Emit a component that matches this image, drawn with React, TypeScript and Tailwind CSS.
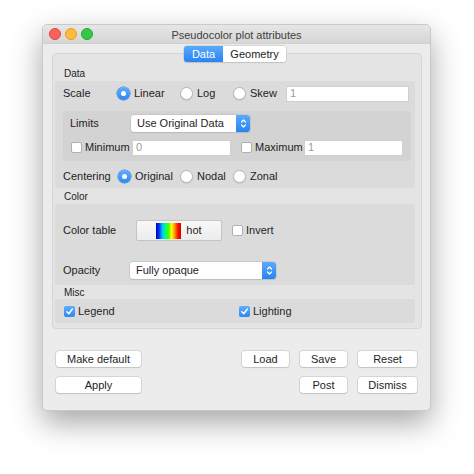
import React from 'react';

const font = "font-['Liberation_Sans',Arial,sans-serif]";

function Radio({ label, checked, width }: { label: string; checked?: boolean; width: string }) {
  return (
    <div className={`flex items-center gap-[4px] ${width}`}>
      {checked ? (
        <span className="flex h-[13px] w-[13px] items-center justify-center rounded-full bg-gradient-to-b from-[#62adfb] to-[#2a87f2] shadow-[0_0_0_0.5px_#2f7fe0]">
          <span className="h-[5px] w-[5px] rounded-full bg-white" />
        </span>
      ) : (
        <span className="h-[13px] w-[13px] rounded-full border border-[#b4b4b4] bg-white shadow-[0_1px_1px_rgba(0,0,0,0.08)]" />
      )}
      <span>{label}</span>
    </div>
  );
}

function Check({ label, checked, width }: { label: string; checked?: boolean; width?: string }) {
  return (
    <div className={`flex items-center gap-[3px] ${width ?? ''}`}>
      {checked ? (
        <span className="flex h-[11px] w-[11px] items-center justify-center rounded-[2px] bg-gradient-to-b from-[#62adfb] to-[#2a87f2]">
          <svg width="9" height="9" viewBox="0 0 10 10">
            <path d="M2 5.3 L4.2 7.5 L8.2 2.2" fill="none" stroke="white" strokeWidth="1.6" strokeLinecap="round" strokeLinejoin="round" />
          </svg>
        </span>
      ) : (
        <span className="h-[11px] w-[11px] rounded-[2px] border border-[#b0b0b0] bg-white" />
      )}
      <span>{label}</span>
    </div>
  );
}

function Field({ value, width }: { value: string; width: string }) {
  return (
    <div className={`flex h-[16px] items-center border border-[#cfcfcf] bg-white px-[3px] text-[#9a9a9a] ${width}`}>
      {value}
    </div>
  );
}

function Select({ value, width }: { value: string; width: string }) {
  return (
    <div className={`flex h-[17px] overflow-hidden rounded-[3px] bg-white shadow-[0_0_0_0.5px_#b9b9b9,0_1px_1px_rgba(0,0,0,0.12)] ${width}`}>
      <span className="flex flex-1 items-center pl-[6px] text-[#1e1e1e]">{value}</span>
      <span className="flex w-[14px] items-center justify-center bg-gradient-to-b from-[#5aa9fb] to-[#2684f1]">
        <svg width="7" height="11" viewBox="0 0 7 11">
          <path d="M1.5 4 L3.5 2 L5.5 4 M1.5 7 L3.5 9 L5.5 7" fill="none" stroke="white" strokeWidth="1.2" strokeLinecap="round" strokeLinejoin="round" />
        </svg>
      </span>
    </div>
  );
}

function Button({ label, width }: { label: string; width: string }) {
  return (
    <div className={`flex h-[16px] items-center justify-center rounded-[3px] bg-white text-[#1e1e1e] shadow-[0_0_0_0.5px_#bdbdbd,0_1px_1px_rgba(0,0,0,0.15)] ${width}`}>
      {label}
    </div>
  );
}

export default function App() {
  return (
    <div className={`h-[474px] w-[474px] bg-white pl-[42px] pt-[24px] text-[11px] text-[#1e1e1e] ${font}`}>
      <div className="flex h-[387px] w-[389px] flex-col overflow-hidden rounded-[5px] border border-[#c9c9c9] bg-[#ececec] shadow-[0_12px_30px_rgba(0,0,0,0.35)]">
        {/* Title bar */}
        <div className="relative flex h-[19px] items-center justify-center border-b border-[#d0d0d0] bg-gradient-to-b from-[#e6e6e6] to-[#d6d6d6] text-[#404040]">
          <div className="absolute left-[6px] top-[3px] flex gap-[4px]">
            <span className="h-[12px] w-[12px] rounded-full border border-[#e2463f] bg-[#fc605c]" />
            <span className="h-[12px] w-[12px] rounded-full border border-[#e1a116] bg-[#fdbc40]" />
            <span className="h-[12px] w-[12px] rounded-full border border-[#2aa52c] bg-[#34c84a]" />
          </div>
          <span className="pt-[2px]">Pseudocolor plot attributes</span>
        </div>

        {/* Tabs */}
        <div className="relative z-10 mt-[2px] flex justify-center pr-[3px]">
          <div className="flex h-[16px] overflow-hidden rounded-[3px] shadow-[0_0_0_0.5px_#bdbdbd,0_1px_1px_rgba(0,0,0,0.12)]">
            <span className="flex w-[39px] items-center justify-center bg-gradient-to-b from-[#5aa9fb] to-[#2684f1] text-white">Data</span>
            <span className="flex w-[63px] items-center justify-center bg-white">Geometry</span>
          </div>
        </div>

        {/* Tab panel */}
        <div className="-mt-[9px] ml-[9px] flex h-[276px] w-[370px] flex-col rounded-[4px] border border-[#d6d6d6] bg-[#e4e4e4] pl-[2px] pr-[6px] pt-[14px]">
          <span className="pl-[9px] text-[10px] leading-[12px]">Data</span>
          <div className="mt-[1px] flex flex-col rounded-[3px] bg-[#dbdbdb] pb-[3px] pt-[4px]">
            <div className="flex h-[17px] items-center pl-[8px]">
              <span className="w-[54px]">Scale</span>
              <Radio label="Linear" checked width="w-[63px]" />
              <Radio label="Log" width="w-[53px]" />
              <Radio label="Skew" width="w-[53px]" />
              <Field value="1" width="w-[123px]" />
            </div>
            <div className="ml-[8px] mr-[4px] mt-[9px] flex h-[50px] flex-col rounded-[3px] bg-[#d3d3d3] pt-[4px]">
              <div className="flex h-[17px] items-center pl-[7px]">
                <span className="w-[61px]">Limits</span>
                <Select value="Use Original Data" width="w-[119px]" />
              </div>
              <div className="mt-[7px] flex h-[17px] items-center pl-[8px]">
                <Check label="Minimum" width="w-[61px]" />
                <Field value="0" width="w-[99px]" />
                <div className="w-[10px]" />
                <Check label="Maximum" width="w-[63px]" />
                <Field value="1" width="w-[99px]" />
              </div>
            </div>
            <div className="mt-[7px] flex h-[17px] items-center pl-[8px]">
              <span className="w-[55px]">Centering</span>
              <Radio label="Original" checked width="w-[62px]" />
              <Radio label="Nodal" width="w-[53px]" />
              <Radio label="Zonal" width="w-[53px]" />
            </div>
          </div>

          <span className="mt-[3px] pl-[9px] text-[10px] leading-[12px]">Color</span>
          <div className="mt-[1px] flex h-[81px] flex-col rounded-[3px] bg-[#dbdbdb] pl-[8px] pt-[16px]">
            <div className="flex h-[21px] items-center">
              <span className="w-[73px]">Color table</span>
              <div className="flex h-[21px] w-[86px] items-center justify-center gap-[5px] rounded-[2px] border border-[#c4c4c4] bg-gradient-to-b from-[#f8f8f8] to-[#ececec]">
                <span className="h-[16px] w-[25px] bg-[linear-gradient(to_right,#0000b0,#0030ff,#00c0ff,#00ff80,#40ff00,#ffff00,#ff9000,#ff1000,#d00000)]" />
                <span>hot</span>
              </div>
              <div className="w-[10px]" />
              <Check label="Invert" />
            </div>
            <div className="mt-[21px] flex h-[17px] items-center">
              <span className="w-[67px]">Opacity</span>
              <Select value="Fully opaque" width="w-[146px]" />
            </div>
          </div>

          <span className="mt-[2px] pl-[9px] text-[10px] leading-[12px]">Misc</span>
          <div className="flex h-[24px] items-center rounded-[3px] bg-[#dbdbdb] pl-[9px]">
            <Check label="Legend" checked width="w-[175px]" />
            <Check label="Lighting" checked />
          </div>
        </div>

        {/* Buttons */}
        <div className="mt-[22px] flex flex-col gap-[10px] px-[13px]">
          <div className="flex items-center">
            <Button label="Make default" width="w-[85px]" />
            <div className="flex-1" />
            <div className="flex gap-[11px]">
              <Button label="Load" width="w-[47px]" />
              <Button label="Save" width="w-[47px]" />
              <Button label="Reset" width="w-[59px]" />
            </div>
          </div>
          <div className="flex items-center">
            <Button label="Apply" width="w-[85px]" />
            <div className="flex-1" />
            <div className="flex gap-[11px]">
              <Button label="Post" width="w-[47px]" />
              <Button label="Dismiss" width="w-[59px]" />
            </div>
          </div>
        </div>
      </div>
    </div>
  );
}
